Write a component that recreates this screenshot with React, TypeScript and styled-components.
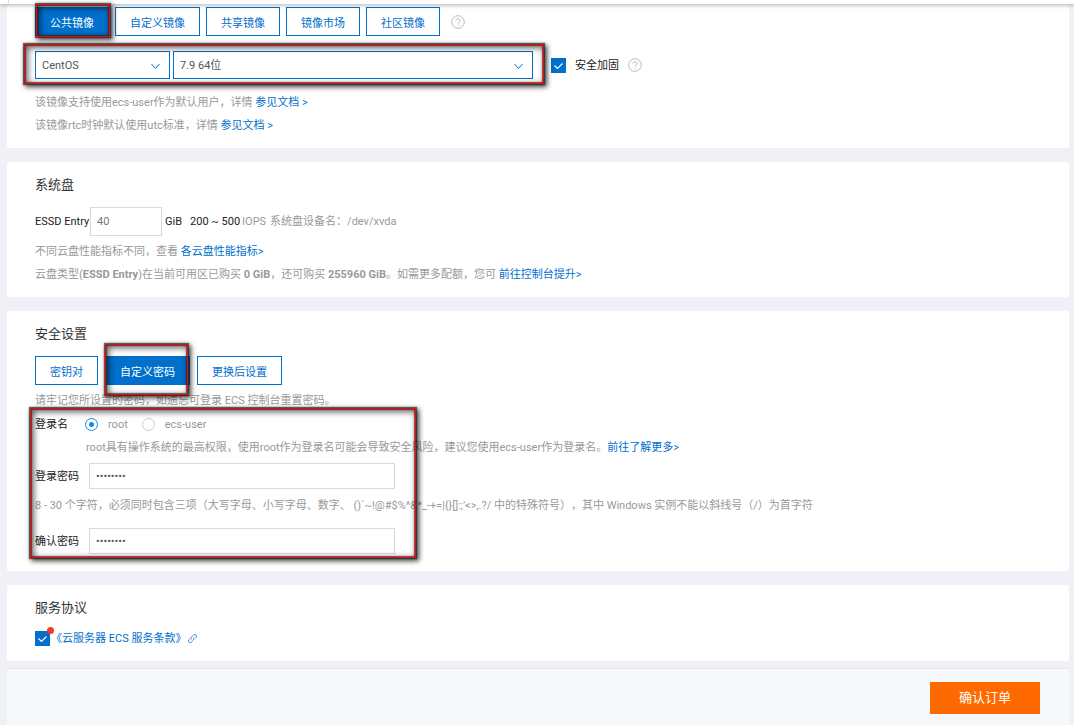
import React, { useState } from "react";
import styled, { createGlobalStyle, css } from "styled-components";

const blue = "#0070cc";

const GlobalStyle = createGlobalStyle`
  *, *::before, *::after { box-sizing: border-box; }
  html, body { margin: 0; min-height: 100vh; background: #f0f1f6; }
  body, button, input, select {
    font-family: Roboto, "Noto Sans CJK SC", sans-serif;
    font-size: 11px;
  }
  body { line-height: 23px; color: #333; text-spacing-trim: space-all; }
  #root { min-height: 100vh; display: flex; flex-direction: column; }
`;

const TopBar = styled.header`
  position: relative;
  z-index: 1;
  height: 4px;
  padding-left: 8px;
  background: #fff;
  box-shadow: 0 1px 4px rgba(0, 0, 0, 0.35);
`;

const TopBarDivider = styled.div`
  width: 1px;
  height: 4px;
  background: #ddd;
`;

const Main = styled.main`
  flex: 1;
  display: flex;
  flex-direction: column;
  gap: 14px;
  padding: 0 5px 7px 7px;
`;

const Card = styled.section<{ $continued?: boolean }>`
  background: #fff;
  border-radius: 2px;
  padding: ${(p) => (p.$continued ? "3px 28px 11px" : "11px 28px 11px")};
`;

const CardTitle = styled.h2`
  margin: 0;
  font-size: 13px;
  font-weight: 400;
  line-height: 23px;
`;

const Row = styled.div<{ $gap?: number; $top?: number; $bottom?: number }>`
  display: flex;
  align-items: center;
  gap: ${(p) => p.$gap ?? 0}px;
  margin-top: ${(p) => p.$top ?? 0}px;
  margin-bottom: ${(p) => p.$bottom ?? 0}px;
  white-space: nowrap;
`;

const Highlighted = styled.div`
  position: relative;
  display: flex;
  gap: 3px;
`;

const Highlight = styled.span<{ $inset: string; $width?: number }>`
  position: absolute;
  z-index: 2;
  inset: ${(p) => p.$inset};
  width: ${(p) => (p.$width ? `${p.$width}px` : "auto")};
  border: 1px solid #f00;
  box-shadow:
    0 0 1px 1px rgba(40, 40, 40, 0.7),
    2px 2px 5px 1px rgba(0, 0, 0, 0.75),
    inset 0 0 1px 1px rgba(40, 40, 40, 0.7),
    inset 2px 2px 6px 1px rgba(0, 0, 0, 0.6);
  pointer-events: none;
`;

const OptionButton = styled.button<{ $active?: boolean }>`
  height: 29px;
  padding: 0 14px;
  border: 1px solid ${blue};
  border-radius: 0;
  background: ${(p) => (p.$active ? blue : "#fff")};
  color: ${(p) => (p.$active ? "#fff" : blue)};
  white-space: nowrap;
  cursor: pointer;
`;

const SelectWrap = styled.div<{ $width: number }>`
  position: relative;
  width: ${(p) => p.$width}px;
`;

const Select = styled.select`
  appearance: none;
  display: block;
  width: 100%;
  height: 28px;
  padding: 0 24px 0 6px;
  border: 1px solid ${blue};
  border-radius: 0;
  background: #fff;
  color: #555;
`;

const SelectArrow = styled.svg`
  position: absolute;
  right: 10px;
  top: 12px;
  pointer-events: none;
`;

const HelpSvg = styled.svg<{ $left: number }>`
  display: block;
  margin-left: ${(p) => p.$left}px;
`;

const Check = styled.input`
  appearance: none;
  flex: none;
  width: 15px;
  height: 15px;
  margin: 0;
  border: 1px solid ${blue};
  background: #fff;
  &:checked {
    background: ${blue}
      url("data:image/svg+xml,%3Csvg xmlns='http://www.w3.org/2000/svg' width='13' height='13' fill='none' stroke='white' stroke-width='1.2'%3E%3Cpath d='M2.5 6.5l3 3 5-5'/%3E%3C/svg%3E")
      center no-repeat;
  }
`;

const CheckGroup = styled.div`
  display: flex;
  align-items: center;
  margin-left: 18px;
`;

const CheckLabel = styled.label`
  margin-left: 9px;
  color: #222;
`;

const Hint = styled.p`
  margin: 0;
  color: #999;
  white-space: nowrap;
`;

const Link = styled.a`
  color: ${blue};
  text-decoration: none;
`;

const fieldBase = css`
  border: 1px solid #d9d9d9;
  border-radius: 0;
  background: #fff;
  color: #555;
  padding: 0 6px;
  outline: none;
`;

const SizeInput = styled.input`
  ${fieldBase}
  width: 72px;
  height: 29px;
  color: #777;
  margin-right: 3px;
`;

const PasswordInput = styled.input`
  ${fieldBase}
  width: 306px;
  height: 26px;
`;

const Muted = styled.span<{ $left?: number }>`
  margin-left: ${(p) => p.$left ?? 0}px;
  color: #999;
`;

const Strong = styled.span<{ $left?: number }>`
  margin-left: ${(p) => p.$left ?? 0}px;
  color: #222;
`;

const FieldLabel = styled.label<{ $width: number }>`
  width: ${(p) => p.$width}px;
  color: #222;
`;

const Credentials = styled.div`
  position: relative;
`;

const Radio = styled.input`
  appearance: none;
  width: 13px;
  height: 13px;
  margin: 0;
  border: 1px solid #ccc;
  border-radius: 50%;
  background: #fff;
  &:checked {
    border-color: #1187e8;
    background: radial-gradient(circle, #1187e8 0 2px, #fff 3px);
  }
`;

const RadioLabel = styled.label`
  margin: 0 14px 0 10px;
  color: #999;
`;

const IndentedHint = styled(Hint)`
  padding-left: 51px;
`;

const CheckBadge = styled.span`
  position: relative;
  display: flex;
  &::after {
    content: "";
    position: absolute;
    top: -4px;
    right: -4px;
    width: 7px;
    height: 7px;
    border-radius: 50%;
    background: #f5382d;
  }
`;

const Footer = styled.footer`
  display: flex;
  justify-content: flex-end;
  margin: 0 5px 0 7px;
  padding: 13px 29px 11px;
  border-top: 1px solid #e8e9ec;
  background: #f7f8fa;
`;

const ConfirmButton = styled.button`
  width: 110px;
  height: 32px;
  border: 0;
  background: #ff6a00;
  color: #fff;
  font-size: 13px;
  line-height: 20px;
  cursor: pointer;
`;

function HelpIcon({ left }: { left: number }) {
  return (
    <HelpSvg $left={left} width="14" height="14" viewBox="0 0 14 14" fill="none" stroke="#bbb">
      <circle cx="7" cy="7" r="6.3" />
      <path d="M5 5.6a2 2 0 1 1 3 1.7c-.7.4-1 .7-1 1.5M7 9.8v1.1" />
    </HelpSvg>
  );
}

function Dropdown(props: { width: number; label: string; value: string }) {
  return (
    <SelectWrap $width={props.width}>
      <Select aria-label={props.label} defaultValue={props.value}>
        <option>{props.value}</option>
      </Select>
      <SelectArrow width="9" height="7" viewBox="0 0 9 7" fill="none" stroke={blue}>
        <path d="M.5 1l4 4.5L8.500 1" />
      </SelectArrow>
    </SelectWrap>
  );
}

const images = ["公共镜像", "自定义镜像", "共享镜像", "镜像市场", "社区镜像"];
const credentials = ["密钥对", "自定义密码", "更换后设置"];

export default function App() {
  const [image, setImage] = useState(0);
  const [credential, setCredential] = useState(1);

  return (
    <>
      <GlobalStyle />
      <TopBar>
        <TopBarDivider />
      </TopBar>
      <Main>
        <Card $continued>
          <Row $gap={6}>
            {images.map((name, i) => (
              <Highlighted key={name}>
                <OptionButton $active={i === image} onClick={() => setImage(i)}>
                  {name}
                </OptionButton>
                {i === 0 && <Highlight $inset="-3px -1px -1px 1px" />}
              </Highlighted>
            ))}
            <HelpIcon left={5} />
          </Row>
          <Row $top={15} $bottom={12}>
            <Highlighted>
              <Dropdown width={135} label="镜像" value="CentOS" />
              <Dropdown width={360} label="版本" value="7.9 64位" />
              <Highlight $inset="-7px -11px -5px -11px" />
            </Highlighted>
            <CheckGroup>
              <Check id="harden" type="checkbox" defaultChecked />
              <CheckLabel htmlFor="harden">安全加固</CheckLabel>
              <HelpIcon left={9} />
            </CheckGroup>
          </Row>
          <Hint>
            该镜像支持使用ecs-user作为默认用户，详情 <Link href="#user">参见文档 &gt;</Link>
          </Hint>
          <Hint>
            该镜像rtc时钟默认使用utc标准，详情 <Link href="#clock">参见文档 &gt;</Link>
          </Hint>
        </Card>

        <Card>
          <CardTitle>系统盘</CardTitle>
          <Row $top={11} $bottom={4}>
            <FieldLabel $width={55} htmlFor="size">ESSD Entry</FieldLabel>
            <SizeInput id="size" defaultValue="40" />
            <Strong>GiB</Strong>
            <Strong $left={8}>200 ~ 500</Strong>
            <Muted $left={2}>IOPS</Muted>
            <Muted $left={4}>系统盘设备名：/dev/xvda</Muted>
          </Row>
          <Hint>
            不同云盘性能指标不同，查看 <Link href="#perf">各云盘性能指标&gt;</Link>
          </Hint>
          <Hint>
            云盘类型(<b>ESSD Entry</b>)在当前可用区已购买 <b>0 GiB</b>，还可购买 <b>255960 GiB</b>
            。如需更多配额，您可 <Link href="#quota">前往控制台提升&gt;</Link>
          </Hint>
        </Card>

        <Card>
          <CardTitle>安全设置</CardTitle>
          <Row $gap={7} $top={11} $bottom={4}>
            {credentials.map((name, i) => (
              <Highlighted key={name}>
                <OptionButton $active={i === credential} onClick={() => setCredential(i)}>
                  {name}
                </OptionButton>
                {i === 1 && <Highlight $inset="-12px 2px -10px 0" />}
              </Highlighted>
            ))}
          </Row>
          <Hint>请牢记您所设置的密码，如遗忘可登录 ECS 控制台重置密码。</Hint>
          <Credentials>
            <Row $top={1}>
              <FieldLabel as="span" $width={50}>登录名</FieldLabel>
              <Radio id="root-user" type="radio" name="login" defaultChecked />
              <RadioLabel htmlFor="root-user">root</RadioLabel>
              <Radio id="ecs-user" type="radio" name="login" />
              <RadioLabel htmlFor="ecs-user">ecs-user</RadioLabel>
            </Row>
            <IndentedHint>
              root具有操作系统的最高权限，使用root作为登录名可能会导致安全风险，建议您使用ecs-user作为登录名。
              <Link href="#more">前往了解更多&gt;</Link>
            </IndentedHint>
            <Row $top={4} $bottom={5}>
              <FieldLabel $width={54} htmlFor="password">登录密码</FieldLabel>
              <PasswordInput id="password" type="password" defaultValue="password" />
            </Row>
            <Hint>
              8 - 30 个字符，必须同时包含三项（大写字母、小写字母、数字、 ()`~!@#$%^&amp;*_-+=|{"{}"}[]:;'&lt;&gt;,.?/
              中的特殊符号），其中 Windows 实例不能以斜线号（/）为首字符
            </Hint>
            <Row $top={11} $bottom={6}>
              <FieldLabel $width={54} htmlFor="confirm">确认密码</FieldLabel>
              <PasswordInput id="confirm" type="password" defaultValue="password" />
            </Row>
            <Highlight $inset="-5px auto -4px -5px" $width={386} />
          </Credentials>
        </Card>

        <Card>
          <CardTitle>服务协议</CardTitle>
          <Row $top={8} $gap={1}>
            <CheckBadge>
              <Check type="checkbox" aria-label="同意服务条款" defaultChecked />
            </CheckBadge>
            <Link href="#terms">《云服务器 ECS 服务条款》</Link>
            <svg width="11" height="11" viewBox="0 0 11 11" fill="none" stroke="#5b8fc9">
              <path d="M4.500 6.500a1.800 1.800 0 0 1 0-2.500l2.300-2.300a1.800 1.800 0 0 1 2.500 2.500L8 5.500M6.500 4.500a1.800 1.800 0 0 1 0 2.500L4.200 9.300a1.800 1.800 0 0 1-2.500-2.500L3 5.500" />
            </svg>
          </Row>
        </Card>
      </Main>
      <Footer>
        <ConfirmButton>确认订单</ConfirmButton>
      </Footer>
    </>
  );
}
